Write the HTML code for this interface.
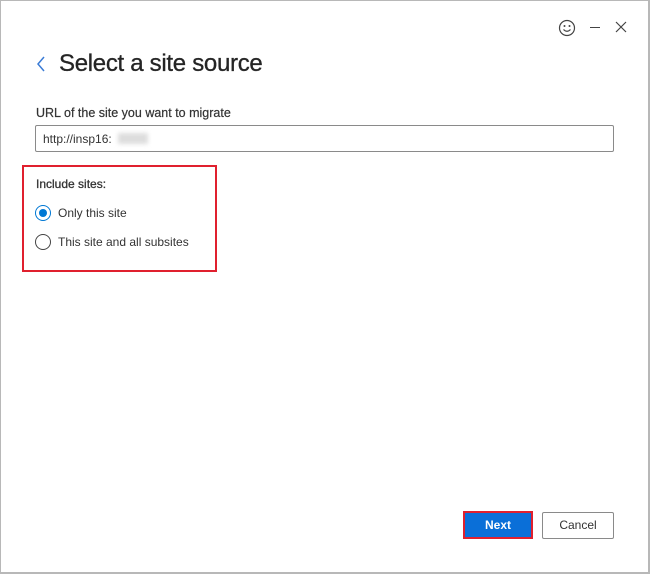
<!DOCTYPE html>
<html><head><style>
body{margin:0;width:650px;height:575px;background:#fff;font-family:"Liberation Sans",sans-serif;position:relative;overflow:hidden}
.frame{position:absolute;left:0;top:0;width:647px;height:571px;border:1px solid #b8b8b8;border-right-width:2px;border-bottom-width:2px}
.abs{position:absolute}
</style></head><body>
<div class="frame"></div>
<svg class="abs" style="left:557px;top:18px" width="20" height="20" viewBox="0 0 20 20"><circle cx="10" cy="10" r="7.5" fill="none" stroke="#444" stroke-width="1.2"/><circle cx="7.5" cy="8" r="1" fill="#444"/><circle cx="12.5" cy="8" r="1" fill="#444"/><path d="M6.5 11.5q3.5 3.5 7 0" fill="none" stroke="#444" stroke-width="1.2"/></svg>
<div class="abs" style="left:590px;top:27px;width:10px;height:1px;background:#444"></div>
<svg class="abs" style="left:615px;top:21px" width="12" height="12" viewBox="0 0 12 12"><path d="M1 1L11 11M11 1L1 11" stroke="#444" stroke-width="1.2"/></svg>
<svg class="abs" style="left:35px;top:56px" width="12" height="16" viewBox="0 0 12 16"><path d="M9 1L3 8L9 15" fill="none" stroke="#3a7bd5" stroke-width="1.5"/></svg>
<div class="abs" style="left:59px;top:50px;font-size:24px;color:#252525;letter-spacing:-0.3px;-webkit-text-stroke:0.3px #252525">Select a site source</div>
<div class="abs" style="left:36px;top:106px;font-size:12.5px;color:#333;-webkit-text-stroke:0.2px #333">URL of the site you want to migrate</div>
<div class="abs" style="left:35px;top:125px;width:577px;height:25px;border:1px solid #8a8a8a;border-radius:2px"></div>
<div class="abs" style="left:43px;top:132px;font-size:12px;color:#333">http://insp16:</div>
<div class="abs" style="left:118px;top:133px;width:30px;height:11px;background:#ddd;filter:blur(2px)"></div>
<div class="abs" style="left:22px;top:165px;width:191px;height:103px;border:2px solid #e0202e"></div>
<div class="abs" style="left:36px;top:177px;font-size:12px;color:#333;-webkit-text-stroke:0.3px #333">Include sites:</div>
<div class="abs" style="left:35px;top:205px;width:14px;height:14px;border:1px solid #0078d4;border-radius:50%"></div>
<div class="abs" style="left:39px;top:209px;width:8px;height:8px;background:#0078d4;border-radius:50%"></div>
<div class="abs" style="left:58px;top:206px;font-size:12px;color:#333">Only this site</div>
<div class="abs" style="left:35px;top:234px;width:14px;height:14px;border:1px solid #444;border-radius:50%"></div>
<div class="abs" style="left:58px;top:235px;font-size:12px;color:#333">This site and all subsites</div>
<div class="abs" style="left:463px;top:511px;width:66px;height:24px;border:2px solid #e0202e;background:#0a6fd8"></div>
<div class="abs" style="left:463px;top:518px;width:70px;text-align:center;font-size:12px;font-weight:bold;color:#fff">Next</div>
<div class="abs" style="left:542px;top:512px;width:70px;height:25px;border:1px solid #8a8a8a;border-radius:2px"></div>
<div class="abs" style="left:542px;top:518px;width:72px;text-align:center;font-size:12px;color:#333">Cancel</div>
</body></html>
